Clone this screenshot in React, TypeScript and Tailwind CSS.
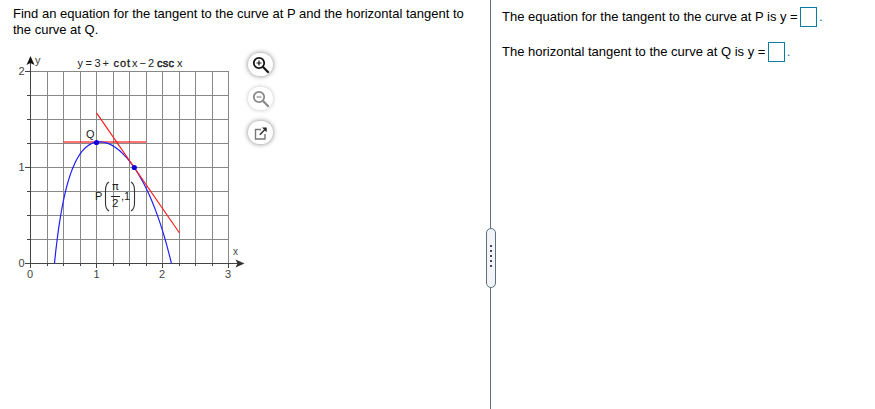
import React from "react";

const X_STEPS = Array.from({ length: 13 }, (_, i) => i);
const Y_STEPS = Array.from({ length: 9 }, (_, i) => i);

const toX = (x: number) => 30.5 + 66 * x;
const toY = (y: number) => 263.5 - 96 * y;

// y = 3 + cot x - 2 csc x, sampled between its two zeros
const START = 0.3635;
const END = 2.1345;
const curve = Array.from({ length: 91 }, (_, i) => {
    const x = START + ((END - START) * i) / 90;
    const y = 3 + 1 / Math.tan(x) - 2 / Math.sin(x);
    return `${toX(x).toFixed(2)},${toY(y).toFixed(2)}`;
}).join(" ");

function Graph() {
    return (
        <svg width="250" height="234" viewBox="0 50 250 234" className="block font-['Liberation_Sans',Arial,sans-serif]">
            <g stroke="#888" strokeWidth="1" shapeRendering="crispEdges">
                {X_STEPS.map((i) => (
                    <line key={i} x1={Math.floor(30 + 16.5 * i + 0.5) + 0.5} x2={Math.floor(30 + 16.5 * i + 0.5) + 0.5} y1="71" y2="263" />
                ))}
                {Y_STEPS.map((i) => (
                    <line key={i} x1="30" x2="229" y1={71.5 + 24 * i} y2={71.5 + 24 * i} />
                ))}
            </g>
            <g stroke="#444" strokeWidth="1" shapeRendering="crispEdges">
                <line x1="30.5" x2="30.5" y1="62" y2="268" />
                <line x1="26" x2="238" y1="263.5" y2="263.5" />
                {X_STEPS.map((i) => (
                    <line key={i} x1={Math.floor(30 + 16.5 * i + 0.5) + 0.5} x2={Math.floor(30 + 16.5 * i + 0.5) + 0.5} y1="263" y2={i % 4 ? 266 : 268} />
                ))}
                {Y_STEPS.map((i) => (
                    <line key={i} x1={i % 4 ? 27 : 25} x2="31" y1={71.5 + 24 * i} y2={71.5 + 24 * i} />
                ))}
            </g>
            <path d="M30.5 56 34.5 65 30.5 63 26.5 65Z" fill="#111" />
            <path d="M244.5 263.5 235.5 267.5 237.5 263.5 235.5 259.5Z" fill="#333" />
            <rect x="63.5" y="141" width="82.5" height="2" fill="#ff0000" fillOpacity="0.55" />
            <polyline points={curve} fill="none" stroke="#2020ff" strokeWidth="1.2" />
            <line x1="96.5" x2="179.5" y1="112.8" y2="233" stroke="#ff1f1f" strokeWidth="1.2" />
            <circle cx="96.5" cy="142.5" r="2.6" fill="#1000dd" />
            <circle cx="134.3" cy="167.5" r="2.6" fill="#1000dd" />
            <g fontSize="11" fill="#444">
                <text x="18.5" y="75">2</text>
                <text x="18.5" y="171">1</text>
                <text x="18.5" y="267">0</text>
                <text x="27" y="278">0</text>
                <text x="93.5" y="278">1</text>
                <text x="159" y="278">2</text>
                <text x="225" y="278">3</text>
                <text x="35" y="64">y</text>
                <text x="233" y="255" fontSize="10">x</text>
            </g>
            <g fontSize="11" fill="#222">
                <text x="77.5" y="67">y</text>
                <text x="85.5" y="67">=</text>
                <text x="94.5" y="67">3</text>
                <text x="102.5" y="67">+</text>
                <text x="113.5" y="67" textLength="16.5" stroke="#222" strokeWidth="0.3">cot</text>
                <text x="132" y="67">x</text>
                <text x="139.5" y="67">−</text>
                <text x="148" y="67">2</text>
                <text x="157" y="67" textLength="17" stroke="#222" strokeWidth="0.45">csc</text>
                <text x="177" y="67">x</text>
                <text x="86" y="138">Q</text>
                <text x="95" y="200">P</text>
                <text x="112" y="190" fontFamily="DejaVu Sans" fontSize="11">π</text>
                <text x="112" y="207" fontSize="11.5">2</text>
                <text x="121" y="200">,</text>
                <text x="124" y="200">1</text>
            </g>
            <line x1="111" x2="120" y1="196.5" y2="196.5" stroke="#222" shapeRendering="crispEdges" />
            <path d="M109 182Q105.5 184 105.5 190V203Q105.5 209 109 211M131 182Q134.5 184 134.5 190V203Q134.5 209 131 211" fill="none" stroke="#333" strokeWidth="1.1" />
        </svg>
    );
}

function Magnifier({ plus }: { plus?: boolean }) {
    return (
        <svg width="18" height="18" viewBox="0 0 18 18" fill="none" stroke={plus ? "#151515" : "#888"}>
            <circle cx="7" cy="7" r="5.2" strokeWidth="1.8" />
            <path d="M10.8 10.8 16.7 16.7" strokeWidth="2.2" />
            <path d={plus ? "M4.5 7H9.5M7 4.5V9.5" : "M4.5 7H9.5"} strokeWidth="1.2" />
        </svg>
    );
}

function OpenIcon() {
    return (
        <svg width="14" height="14" viewBox="0 0 14 14" fill="none">
            <path d="M7 3.5H1.5V13H11V8" stroke="#777" strokeWidth="1.4" />
            <path d="M5.8 8.7 10.5 4" stroke="#333" strokeWidth="1.5" />
            <path d="M8 1.5H12.7V6.2Z" fill="#222" />
        </svg>
    );
}

function ToolButton({ dim, children }: { dim?: boolean; children: React.ReactNode }) {
    return (
        <button
            className={`flex h-[23px] w-[25px] items-center justify-center rounded-full bg-white ${
                dim ? "shadow-[0_0_4px_rgba(0,0,0,0.25)]" : "shadow-[0_0_5px_rgba(0,0,0,0.5)]"
            }`}
        >
            {children}
        </button>
    );
}

function Answer({ label }: { label: string }) {
    return (
        <div className="flex h-5 items-center whitespace-nowrap">
            <span>{label}</span>
            <span className="ml-[2.4px] h-5 w-[17px] shrink-0 border border-[#087ca3]" />
            <span className="ml-0.5 text-[#087ca3]">.</span>
        </div>
    );
}

export default function App() {
    return (
        <main className="flex h-[409px] w-[875px] overflow-hidden bg-white font-['Liberation_Sans',Arial,sans-serif] text-[13px] leading-4 text-black">
            <section className="w-[485px] shrink-0">
                <div className="h-[50px] pt-1.5 pl-[13px] whitespace-nowrap">
                    <p>Find an equation for the tangent to the curve at P and the horizontal tangent to</p>
                    <p>the curve at Q.</p>
                </div>
                <div className="flex">
                    <Graph />
                    <div className="-ml-1 flex flex-col gap-[11px] pt-[3px] pl-[2px]">
                        <ToolButton><Magnifier plus /></ToolButton>
                        <ToolButton dim><Magnifier /></ToolButton>
                        <ToolButton><OpenIcon /></ToolButton>
                    </div>
                </div>
            </section>
            <div className="flex w-[11px] shrink-0 flex-col items-center">
                <div className="h-[228px] w-px bg-[#5d6f80]" />
                <div className="flex h-[60px] w-2.5 flex-col items-center justify-center gap-[3px] rounded-full border border-[#5d6f80] bg-[#f2f4f8] pb-1">
                    {[0, 1, 2, 3, 4].map((dot) => (
                        <span key={dot} className="h-0.5 w-0.5 bg-[#4a4760]" />
                    ))}
                </div>
                <div className="w-px flex-1 bg-[#5d6f80]" />
            </div>
            <section className="flex flex-col gap-[15px] pt-[7px] pl-1.5">
                <Answer label="The equation for the tangent to the curve at P is y =" />
                <Answer label="The horizontal tangent to the curve at Q is y =" />
            </section>
        </main>
    );
}
